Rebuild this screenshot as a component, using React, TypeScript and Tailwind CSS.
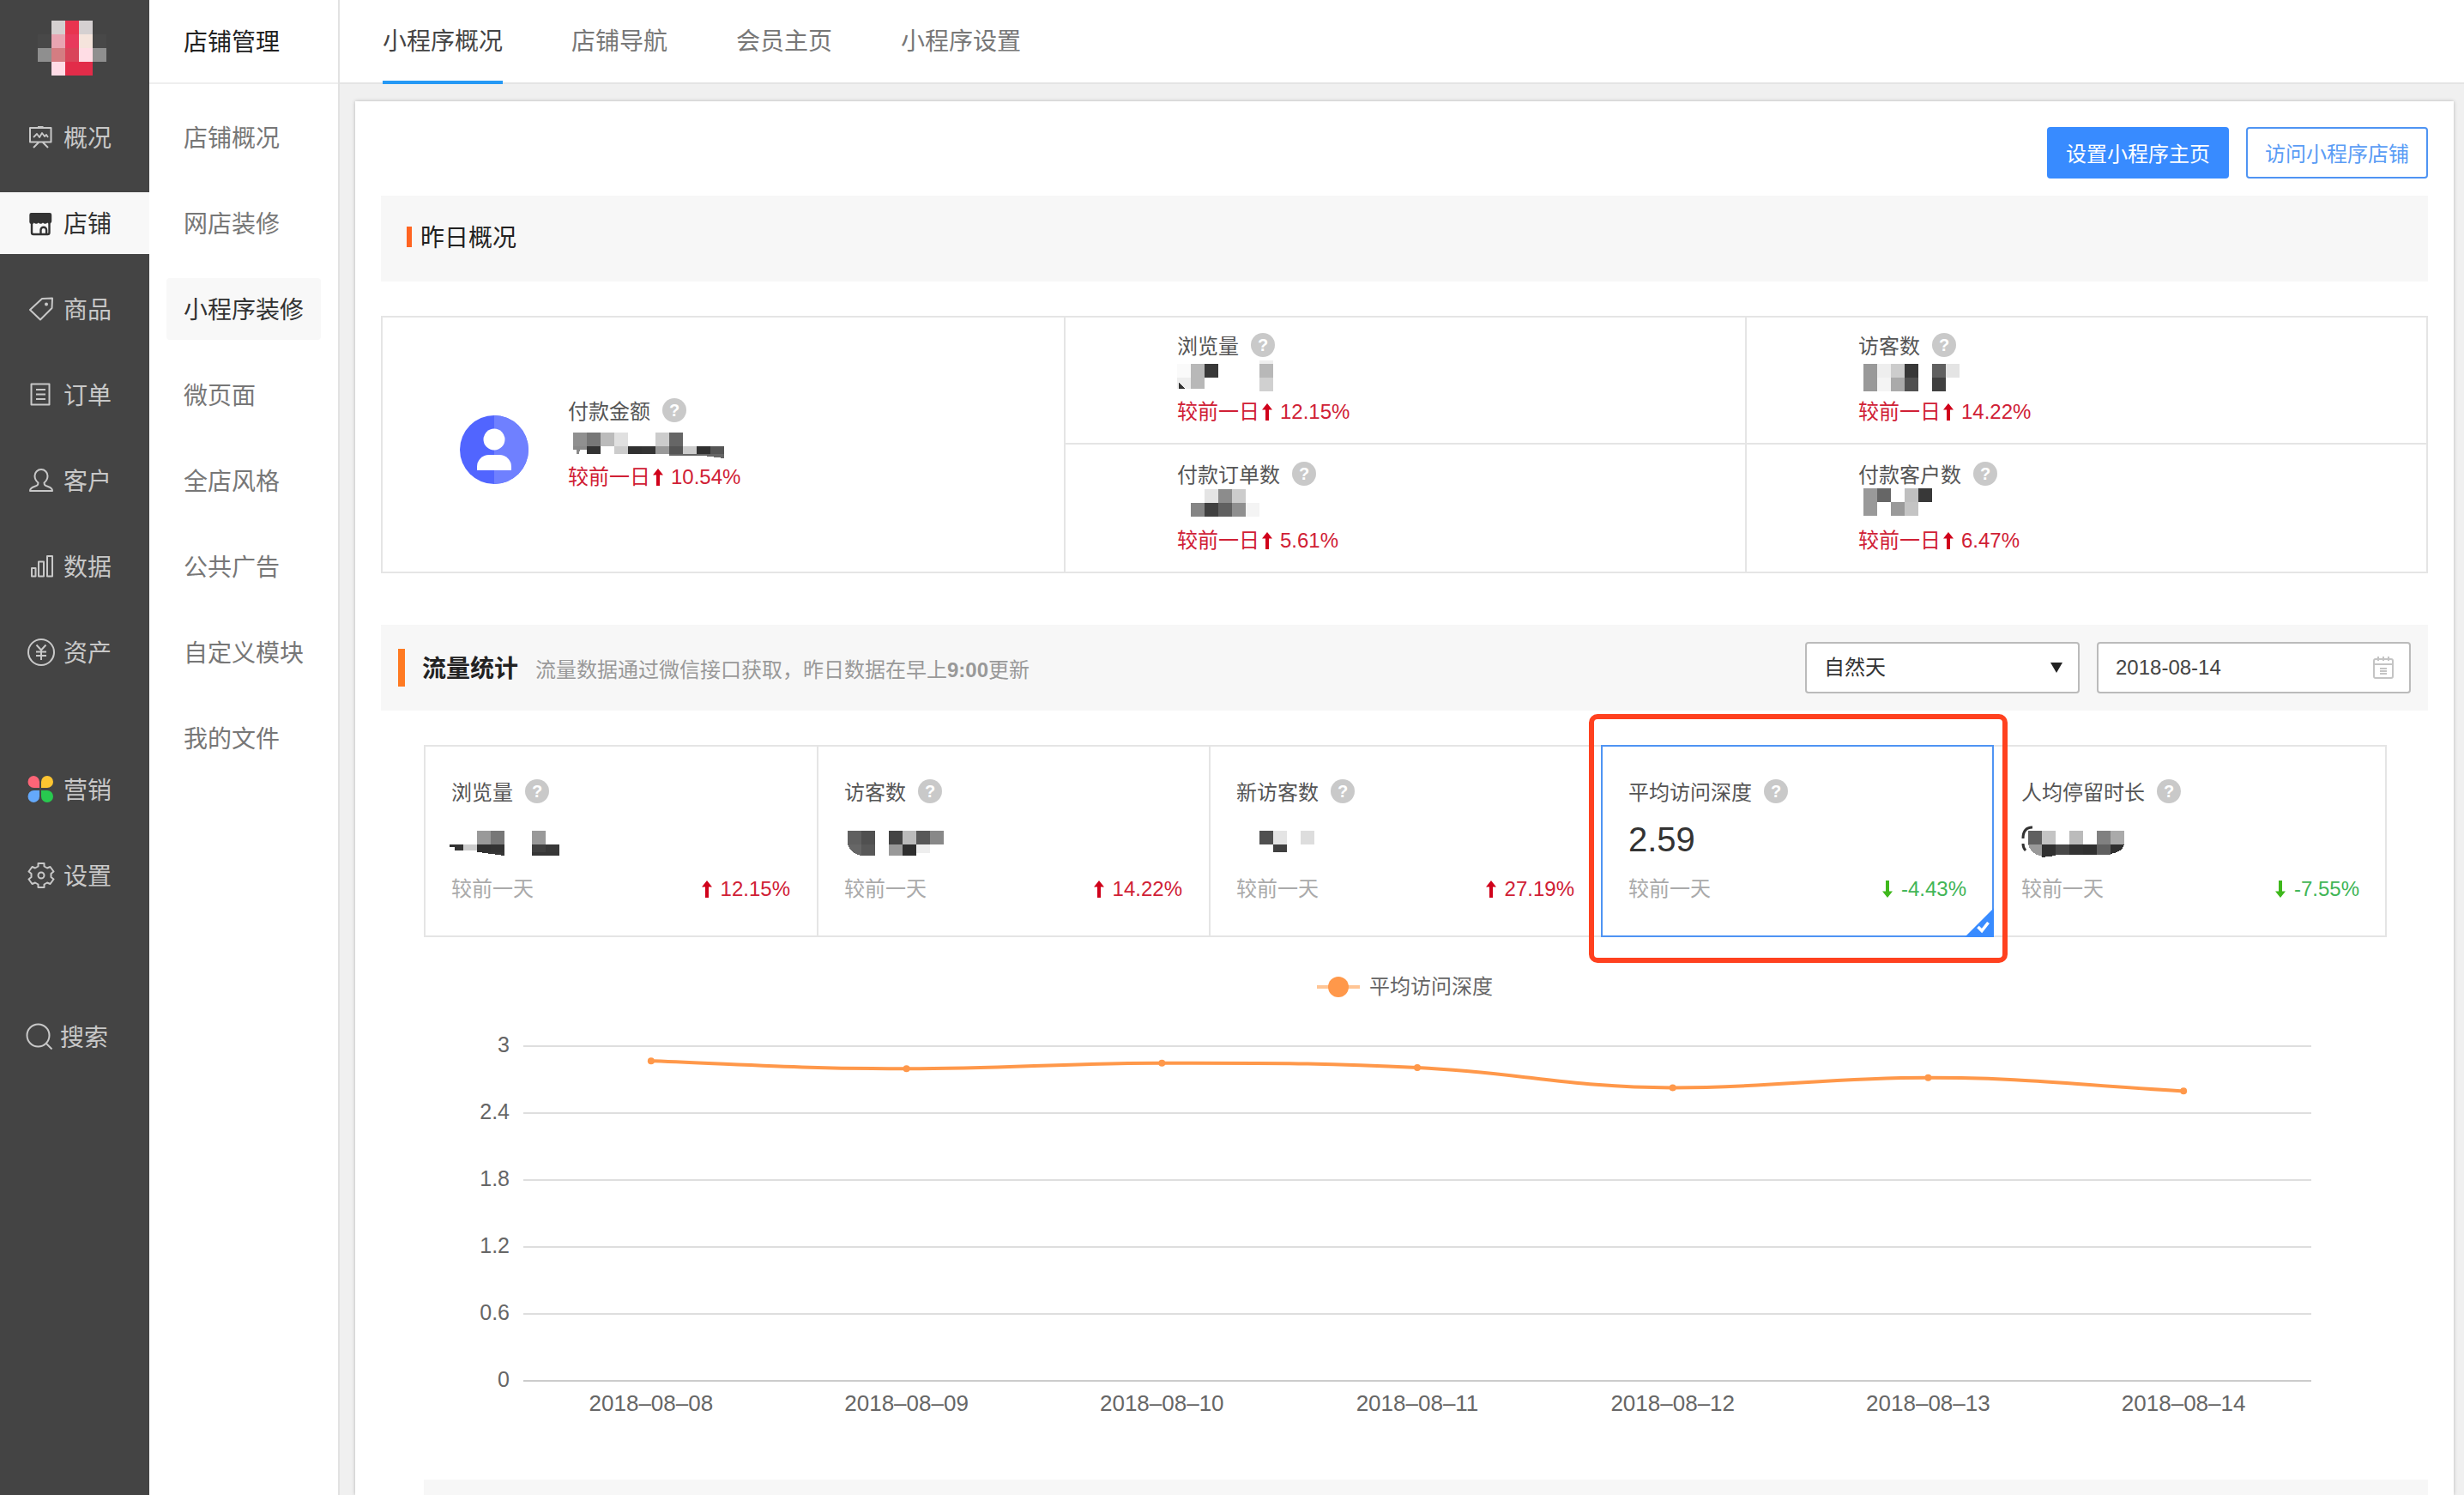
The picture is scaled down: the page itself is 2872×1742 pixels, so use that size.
import type { ReactNode } from "react";

type Cell = string | null;

/* Iconos del menú lateral, todos en una caja de 32x32 */
function Icon({ children }: { children: ReactNode }) {
  return (
    <svg
      viewBox="0 0 32 32"
      className="size-8 shrink-0"
      fill="none"
      stroke="currentColor"
      strokeWidth="2"
      strokeLinejoin="round"
    >
      {children}
    </svg>
  );
}

const overviewIcon = (
  <Icon>
    <path d="M3 5h24.500v16.500H3zM12 4h6.500M13 22l-6 6M18 22l6 6" />
    <path d="M7 16l4-4 3 4 3-5 3 4 2-2 2 3" strokeWidth="1.8" />
  </Icon>
);

const shopIcon = (
  <Icon>
    <path d="M5 14v13a2 2 0 0 0 2 2h16.500a2 2 0 0 0 2-2V14" strokeWidth="2.4" />
    <path d="M15.500 29v-5a3.300 3.300 0 0 1 6.600 0v5" strokeWidth="2.4" />
    <path
      d="M4.500 4h21.500a2.200 2.200 0 0 1 2.200 2.200V14a2.800 2.800 0 0 1-5 1.500 3.400 3.400 0 0 1-5.200 0 3.400 3.400 0 0 1-5.200 0 3.400 3.400 0 0 1-5.200 0A2.800 2.800 0 0 1 2.300 14V6.200A2.200 2.200 0 0 1 4.500 4z"
      fill="currentColor"
      stroke="none"
    />
  </Icon>
);

const goodsIcon = (
  <Icon>
    <path d="M3 17L17 4l12-.5-.5 11.500L15 28.500z" />
    <circle cx="22" cy="10.500" r="2" fill="currentColor" stroke="none" />
  </Icon>
);

const orderIcon = (
  <Icon>
    <path d="M4.500 3.500h21v24h-21zM10 10h11M10 15.500h11M10 21h11" />
  </Icon>
);

const customerIcon = (
  <Icon>
    <path d="M12.500 18.500C9.500 16 8.500 13.500 8.500 10.500a7.500 7.500 0 0 1 15 0c0 3-1 5.500-4 8 0 3 1.500 3.500 4.500 4.500s5 2 5 5H3c0-3 2-4 5-5s4.500-1.500 4.500-4.500z" />
  </Icon>
);

const dataIcon = (
  <Icon>
    <path d="M5 18h4.500v9.500H5zM13 10.500h6v17h-6zM23 4h6v23.500h-6z" />
  </Icon>
);

const assetIcon = (
  <Icon>
    <circle cx="16" cy="16" r="15" />
    <path d="M10.500 7.500l5.500 6 5.500-6M16 13.500V25M10 15.500h12M10 20h12" />
  </Icon>
);

const marketingIcon = (
  <Icon>
    <g stroke="none">
      <path d="M7.500 0A7 7 0 1 0 7.500 14H14V7A7 7 0 0 0 7.500 0z" fill="#fd6577" />
      <path d="M23 0A7 7 0 0 0 16 7v7h7a7 7 0 0 0 0-14z" fill="#fdc531" />
      <path d="M7.500 31A7 7 0 0 1 7.500 17H14v7a7 7 0 0 1-6.500 7z" fill="#64a9fb" />
      <path d="M23 31a7 7 0 0 1-7-7v-7h7a7 7 0 0 1 0 14z" fill="#28c94f" />
    </g>
  </Icon>
);

const settingsIcon = (
  <Icon>
    <path d="M12.500 2h7v3.500l3.500 2 3.500-1.500 4 5.500-3 2.500v4l3 2.500-4 5.500-3.500-1.500-3.500 2V30h-7v-3.500l-3.500-2L5.500 26l-4-5.500 3-2.500v-4l-3-2.500 4-5.500L9 7.500l3.500-2z" />
    <circle cx="16" cy="16" r="3.500" />
  </Icon>
);

const searchIcon = (
  <Icon>
    <circle cx="14.500" cy="14.500" r="13" />
    <path d="M23.500 23.500l7 7" />
  </Icon>
);

const menu = [
  { label: "概况", icon: overviewIcon, className: "text-[#c8c8c8]" },
  { label: "店铺", icon: shopIcon, className: "bg-[#f8f8f8] text-[#333]" },
  { label: "商品", icon: goodsIcon, className: "text-[#c8c8c8]" },
  { label: "订单", icon: orderIcon, className: "text-[#c8c8c8]" },
  { label: "客户", icon: customerIcon, className: "text-[#c8c8c8]" },
  { label: "数据", icon: dataIcon, className: "text-[#c8c8c8]" },
  { label: "资产", icon: assetIcon, className: "text-[#c8c8c8]" },
  { label: "营销", icon: marketingIcon, className: "mt-[60px] text-[#c8c8c8]" },
  { label: "设置", icon: settingsIcon, className: "text-[#c8c8c8]" },
];

const subMenu = [
  "店铺概况",
  "网店装修",
  "小程序装修",
  "微页面",
  "全店风格",
  "公共广告",
  "自定义模块",
  "我的文件",
];

const tabs = ["小程序概况", "店铺导航", "会员主页", "小程序设置"];

/* Cifras ocultas con mosaico */
function Mosaic({
  rows,
  offset = 0,
  last = 16,
  children,
}: {
  rows: Cell[][];
  offset?: number;
  last?: number;
  children?: ReactNode;
}) {
  return (
    <svg
      width="200"
      height="32"
      viewBox={`${-offset} 0 200 32`}
      className="block overflow-visible"
      shapeRendering="crispEdges"
    >
      {rows.map((row, y) =>
        row.map((fill, x) =>
          fill ? (
            <rect
              key={`${x}-${y}`}
              x={x * 16}
              y={y * 16}
              width="16"
              height={y === rows.length - 1 ? last : 16}
              fill={fill}
            />
          ) : null,
        ),
      )}
      {children}
    </svg>
  );
}

function Logo() {
  const rows: Cell[][] = [
    [null, "#d5d0d0", "#e8344f", "#d5d0d1", null],
    ["#484848", "#e8a5b2", "#e83a5c", "#f5e4dc", "#484848"],
    ["#8f8f8f", "#d47d82", "#d9455a", "#ffdde5", "#8f8f8f"],
    [null, "#ffdce6", "#e22c49", "#e22c49", null],
  ];
  return (
    <svg viewBox="0 0 80 64" className="h-16 w-20" shapeRendering="crispEdges">
      {rows.map((row, y) =>
        row.map((fill, x) =>
          fill ? (
            <rect key={`${x}-${y}`} x={x * 16} y={y * 16} width="16" height="16" fill={fill} />
          ) : null,
        ),
      )}
    </svg>
  );
}

function Help() {
  return (
    <span className="flex size-7 items-center justify-center rounded-full bg-[#c9c9c9] text-xl font-bold leading-none text-white">
      ?
    </span>
  );
}

function Arrow({ down = false }: { down?: boolean }) {
  return (
    <svg
      viewBox="0 0 12 20"
      className={down ? "h-5 w-3 rotate-180 text-[#3fb81c]" : "h-5 w-3 text-[#d0021b]"}
      fill="currentColor"
    >
      <path d="M6 0l6 7.500H8V20H4V7.500H0z" />
    </svg>
  );
}

function Label({ children }: { children: ReactNode }) {
  return (
    <div className="flex h-7 items-center gap-3.5">
      <span className="pt-1">{children}</span>
      <Help />
    </div>
  );
}

function DayChange({ value }: { value: string }) {
  return (
    <div className="flex h-7 items-center text-[#d02035]">
      <span>较前一日</span>
      <span className="ml-[3px] mr-[9px]">
        <Arrow />
      </span>
      <span>{value}</span>
    </div>
  );
}

function Metric({ label, value, children }: { label: string; value: string; children: ReactNode }) {
  return (
    <div>
      <Label>{label}</Label>
      <div className="h-[50px]">{children}</div>
      <DayChange value={value} />
    </div>
  );
}

const cardBorder = {
  normal: "border-y-2 border-l-2 border-[#e5e5e5] pl-[30px] pr-[31px]",
  active: "border-2 border-[#4f94f3] pl-[30px] pr-[30px]",
  last: "border-y-2 border-r-2 border-[#e5e5e5] pl-8 pr-[30px]",
};

function TrendCard({
  label,
  value,
  down = false,
  kind = "normal",
  children,
}: {
  label: string;
  value: string;
  down?: boolean;
  kind?: keyof typeof cardBorder;
  children: ReactNode;
}) {
  return (
    <div className={`relative h-56 pt-[38px] ${cardBorder[kind]}`}>
      <Label>{label}</Label>
      <div className="h-[86px] pt-8">{children}</div>
      <div className="flex h-7 items-center justify-between">
        <span className="text-[#aaa]">较前一天</span>
        <span
          className={`flex items-center gap-2.5 ${down ? "text-[#41b556]" : "text-[#d02035]"}`}
        >
          <Arrow down={down} />
          {value}
        </span>
      </div>
      {kind === "active" && (
        <>
          <svg viewBox="0 0 34 34" className="absolute -bottom-0.5 -right-0.5 size-[34px]">
            <path d="M34 0v34H0z" fill="#388bff" />
            <path d="M15.500 22l4.500 4.500 7.500-9.500" fill="none" stroke="#fff" strokeWidth="3.6" />
          </svg>
          {/* Marco de aviso alrededor de la tarjeta elegida */}
          <div className="absolute -bottom-8 -left-4 -right-[18px] -top-[38px] z-10 rounded-[10px] border-[6px] border-[#ff411f]" />
        </>
      )}
    </div>
  );
}

const series = [
  { date: "2018–08–08", depth: 2.86 },
  { date: "2018–08–09", depth: 2.79 },
  { date: "2018–08–10", depth: 2.84 },
  { date: "2018–08–11", depth: 2.8 },
  { date: "2018–08–12", depth: 2.62 },
  { date: "2018–08–13", depth: 2.71 },
  { date: "2018–08–14", depth: 2.59 },
];

const ticks = ["3", "2.4", "1.8", "1.2", "0.6", "0"];

function DepthChart() {
  const left = 116;
  const width = 2084;
  const step = width / series.length;
  const points = series.map((s, i) => ({
    x: left + step * (i + 0.5),
    y: 410 - (s.depth / 3) * 390,
  }));
  const slope = (i: number) => {
    if (i === 0 || i === points.length - 1) return 0;
    const a = points[i].y - points[i - 1].y;
    const b = points[i + 1].y - points[i].y;
    return a * b <= 0 ? 0 : (a + b) / 2;
  };
  let d = `M${points[0].x} ${points[0].y}`;
  for (let i = 1; i < points.length; i++) {
    const p = points[i - 1];
    const q = points[i];
    const k = step * 0.4;
    const c1 = i === 1 ? p.y + (q.y - p.y) * 0.5 : p.y + slope(i - 1) * 0.4;
    const c2 = i === points.length - 1 ? q.y - (q.y - p.y) * 0.4 : q.y - slope(i) * 0.4;
    d += ` C${p.x + k} ${c1} ${q.x - k} ${c2} ${q.x} ${q.y}`;
  }

  return (
    <svg width="2288" height="480" viewBox="0 0 2288 480" className="block">
      {ticks.map((t, i) => (
        <g key={t}>
          <rect x={left} y={20 + i * 78} width={width} height="2" fill={t === "0" ? "#ccc" : "#dedede"} />
          <text x="100" y={28 + i * 78} textAnchor="end" fontSize="25" fill="#666">
            {t}
          </text>
        </g>
      ))}
      <path d={d} fill="none" stroke="#ff984a" strokeWidth="4" />
      {points.map((p) => (
        <circle key={p.x} cx={p.x} cy={p.y} r="4" fill="#ff984a" />
      ))}
      {series.map((s, i) => (
        <text key={s.date} x={points[i].x} y="446" textAnchor="middle" fontSize="26" fill="#666">
          {s.date}
        </text>
      ))}
    </svg>
  );
}

export default function App() {
  return (
    <div className="flex h-[1742px] w-[2872px] overflow-hidden bg-[#f0f0f0] font-['Liberation_Sans','Noto_Sans_CJK_SC',sans-serif] text-2xl leading-7 text-[#555]">
      {/* Menú principal */}
      <aside className="flex w-[174px] shrink-0 flex-col bg-[#444] text-[28px]">
        <div className="mb-9 pl-11 pt-6">
          <Logo />
        </div>
        <nav className="flex flex-col gap-7">
          {menu.map((item) => (
            <a key={item.label} className={`flex h-[72px] items-center gap-2.5 pl-8 ${item.className}`}>
              {item.icon}
              <span className="pt-1">{item.label}</span>
            </a>
          ))}
          <a className="mt-[88px] flex h-[72px] items-center gap-2 pl-[30px] text-[#c8c8c8]">
            {searchIcon}
            <span className="pt-1">搜索</span>
          </a>
        </nav>
      </aside>

      {/* Submenú */}
      <aside className="w-[222px] shrink-0 border-r-2 border-[#e2e2e2] bg-white text-[28px]">
        <h2 className="flex h-[98px] items-center border-b-2 border-[#eee] pl-10 pt-[3px] text-[#222]">
          店铺管理
        </h2>
        <nav className="mt-[26px] flex flex-col gap-7 px-5">
          {subMenu.map((label) => (
            <a
              key={label}
              className={`flex h-[72px] items-center whitespace-nowrap rounded pl-5 pt-1 ${
                label === "小程序装修" ? "bg-[#f8f8f8] text-[#333]" : "text-[#777]"
              }`}
            >
              {label}
            </a>
          ))}
        </nav>
      </aside>

      <div className="flex min-w-0 flex-1 flex-col">
        <header className="flex h-[98px] shrink-0 gap-20 border-b-2 border-[#e4e4e4] bg-white pl-[50px] text-[28px]">
          {tabs.map((label, i) => (
            <a
              key={label}
              className={`flex h-[98px] items-center border-b-4 pt-[3px] ${
                i === 0 ? "border-[#2699f5] text-[#444]" : "border-transparent text-[#777]"
              }`}
            >
              {label}
            </a>
          ))}
        </header>

        <main className="ml-[18px] mr-3 mt-5 flex-1 bg-white px-[30px] pt-[30px] shadow-[0_0_4px_rgba(0,0,0,0.25)]">
          <div className="flex justify-end gap-5">
            <button className="h-[60px] w-[212px] rounded bg-[#388bff] pt-1 text-white">
              设置小程序主页
            </button>
            <button className="h-[60px] w-[212px] rounded border-2 border-[#4f94f3] pt-1 text-[#5a9cf5]">
              访问小程序店铺
            </button>
          </div>

          {/* Resumen de ayer */}
          <div className="mt-5 flex h-[100px] items-center bg-[#f7f7f7] pl-[30px]">
            <span className="mb-1 h-6 w-1.5 bg-[#ff6421]" />
            <h3 className="ml-2.5 text-[28px] text-[#222]">昨日概况</h3>
          </div>

          <section className="mt-10 flex h-[300px] border-2 border-[#e5e5e5]">
            <div className="flex w-[794px] pl-[90px] pt-[94px]">
              <svg viewBox="0 0 80 80" className="mt-5 size-20">
                <circle cx="40" cy="40" r="40" fill="#5165ff" />
                <path d="M40 0a40 40 0 0 1 0 80z" fill="#6f80ff" />
                <circle cx="40" cy="28" r="12.500" fill="#fff" />
                <path d="M20 64v-4a14 14 0 0 1 14-14h12a14 14 0 0 1 14 14v4z" fill="#fff" />
              </svg>
              <div className="ml-[46px]">
                <Label>付款金额</Label>
                <div className="h-[50px] pt-3">
                  <Mosaic
                    offset={6}
                    last={9}
                    rows={[
                      ["#909090", "#777", "#bbb", "#e0e0e0", null, null, "#ccc", "#666"],
                      [null, "#333", null, "#ccc", "#303030", "#333", "#999", "#555", "#ccc", "#303030", "#555"],
                    ]}
                  >
                    <path d="M0 16h16v4H8l-1 5H4v-5H0z" fill="#8a8a8a" />
                    <path d="M112 25h64v5l-24-3h-40z" fill="#666" />
                  </Mosaic>
                </div>
                <DayChange value="10.54%" />
              </div>
            </div>
            <div className="grid flex-1 grid-cols-2 grid-rows-[148px_148px]">
              <div className="border-b-2 border-l-2 border-[#e5e5e5] pl-[130px] pt-[18px]">
                <Metric label="浏览量" value="12.15%">
                  <div className="pt-2">
                    <Mosaic
                      last={13}
                      rows={[
                        ["#fafafa", "#b8b8b8", "#383838", null, null, null, "#b8b8b8"],
                        ["#eee", "#b8b8b8", null, null, null, null, "#d0d0d0"],
                      ]}
                    >
                      <path d="M2 22l8 7H2z" fill="#333" />
                      <path d="M96 -4h16v4H96z" fill="#eee" />
                      <path d="M96 29h16v3H96z" fill="#d0d0d0" />
                    </Mosaic>
                  </div>
                </Metric>
              </div>
              <div className="border-b-2 border-l-2 border-[#e5e5e5] pl-[130px] pt-[18px]">
                <Metric label="访客数" value="14.22%">
                  <div className="pt-2">
                    <Mosaic
                      offset={6}
                      rows={[
                        ["#999", "#eee", "#ccc", "#383838", null, "#606060", "#e4e4e4"],
                        ["#999", "#f4f4f4", "#aaa", "#505050", null, "#404040"],
                      ]}
                    />
                  </div>
                </Metric>
              </div>
              <div className="border-l-2 border-[#e5e5e5] pl-[130px] pt-5">
                <Metric label="付款订单数" value="5.61%">
                  <div className="pt-1">
                    <Mosaic
                      offset={16}
                      rows={[
                        [null, "#e4e4e4", "#8c8c8c", "#ccc"],
                        ["#858585", "#404040", "#606060", "#8f8f8f", "#f4f4f4"],
                      ]}
                    />
                  </div>
                </Metric>
              </div>
              <div className="border-l-2 border-[#e5e5e5] pl-[130px] pt-5">
                <Metric label="付款客户数" value="6.47%">
                  <div className="pt-[3px]">
                    <Mosaic
                      offset={6}
                      rows={[
                        ["#999", "#666", null, "#bfbfbf", "#383838"],
                        ["#999", null, "#9a9a9a", "#c4c4c4"],
                      ]}
                    />
                  </div>
                </Metric>
              </div>
            </div>
          </section>

          {/* Estadísticas de tráfico */}
          <div className="mt-[60px] flex h-[100px] items-center bg-[#f7f7f7] px-5">
            <span className="h-11 w-2 bg-[#ff7a22]" />
            <h3 className="ml-5 pt-[3px] text-[28px] font-bold text-[#222]">流量统计</h3>
            <p className="ml-5 pt-1.5 text-[#999]">
              流量数据通过微信接口获取，昨日数据在早上<b>9:00</b>更新
            </p>
            <div className="ml-auto flex h-[60px] w-80 items-center justify-between rounded border-2 border-[#bbb] bg-white pl-5 pr-[18px] text-[#333]">
              自然天
              <svg viewBox="0 0 14 12" className="h-3 w-3.5">
                <path d="M0 0h14L7 12z" fill="#222" />
              </svg>
            </div>
            <div className="ml-5 flex h-[60px] w-[366px] items-center justify-between rounded border-2 border-[#bbb] bg-white pl-5 pr-[18px] text-[#444]">
              2018-08-14
              <svg viewBox="0 0 24 26" className="h-[26px] w-6" fill="none" stroke="#c4c4c4" strokeWidth="2">
                <rect x="1" y="3" width="22" height="22" rx="2" />
                <path d="M1 9h22M6 0v5M12 0v5M18 0v5M8 14h8M8 17h8M8 20h8" />
              </svg>
            </div>
          </div>

          <section className="ml-[50px] mt-10 grid w-[2288px] grid-cols-[458px_457px_457px_458px_458px]">
            <TrendCard label="浏览量" value="12.15%">
              <Mosaic
                offset={-2}
                last={9}
                rows={[
                  [null, null, "#999", "#777", null, null, "#999"],
                  [null, null, "#303030", "#333", null, null, "#404040", "#383838"],
                ]}
              >
                <path d="M0 16h16v7H6v-4H0z" fill="#333" />
                <path d="M16 16h16v7H16z" fill="#ccc" />
                <path d="M34 25h30v4zM96 25h32v4H96z" fill="#363636" />
              </Mosaic>
            </TrendCard>
            <TrendCard label="访客数" value="14.22%">
              <Mosaic
                offset={4}
                last={13}
                rows={[
                  ["#606060", "#505050", null, "#444", "#bbb", "#585858", "#888"],
                  [null, "#585858", null, "#999", "#2f2f2f"],
                ]}
              >
                <path d="M0 16h16v13q-12-2-16-13z" fill="#666" />
                <path d="M80 16h16v10H80z" fill="#eee" />
              </Mosaic>
            </TrendCard>
            <TrendCard label="新访客数" value="27.19%">
              <Mosaic
                offset={27}
                last={9}
                rows={[
                  ["#505050", "#e4e4e4", null, "#ddd"],
                  [null, "#404040"],
                ]}
              />
            </TrendCard>
            <TrendCard label="平均访问深度" value="-4.43%" down kind="active">
              <p className="-mt-0.5 text-[40px] leading-[24px] text-[#333]">2.59</p>
            </TrendCard>
            <TrendCard label="人均停留时长" value="-7.55%" down kind="last">
              <Mosaic
                offset={8}
                last={12}
                rows={[
                  ["#606060", "#c4c4c4", null, "#bbb", null, "#808080", "#aaa"],
                  [null, null, "#484848", "#333", "#303030", "#606060"],
                ]}
              >
                <path d="M0 16h16v14Q3 27 0 16z" fill="#999" />
                <path d="M16 16h16v13l-16 2z" fill="#303030" />
                <path d="M96 16h16q-2 9-16 11z" fill="#303030" />
                <path
                  d="M5-4Q-6-4-6 9M-6 15q0 5 3 8"
                  fill="none"
                  stroke="#333"
                  strokeWidth="3"
                  shapeRendering="auto"
                />
              </Mosaic>
            </TrendCard>
          </section>

          <div className="ml-[50px] mt-11 flex h-7 items-center pl-[1041px] text-[#666]">
            <svg viewBox="0 0 50 24" className="mr-[11px] h-6 w-[50px]">
              <path d="M0 12h50" stroke="#ffc595" strokeWidth="4" />
              <circle cx="25" cy="12" r="12" fill="#ff984a" />
            </svg>
            平均访问深度
          </div>

          <div className="ml-[50px] mt-[34px]">
            <DepthChart />
          </div>

          <div className="ml-[50px] mt-[46px] h-[18px] bg-[#f7f7f7]" />
        </main>
      </div>
    </div>
  );
}
